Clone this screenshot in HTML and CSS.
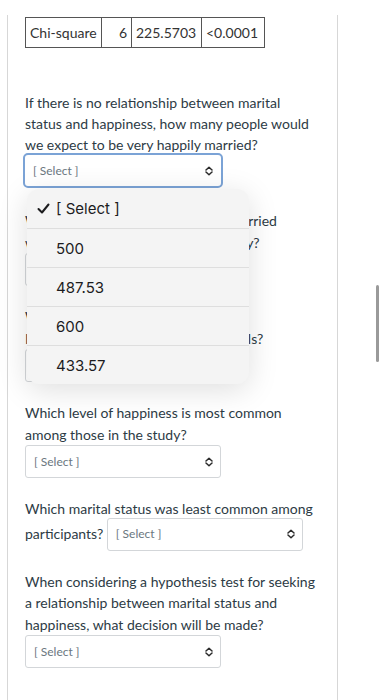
FILE: index.html
```html
<!DOCTYPE html>
<html>
<head>
  <meta charset="UTF-8">
  <title>Quiz - Chi-square</title>
  <link rel="stylesheet" href="styles.css">
</head>
<body>

  <div class="page">
    <table class="stats">
      <tr>
        <td class="label">Chi-square</td>
        <td class="df">6</td>
        <td class="val">225.5703</td>
        <td class="pval">&lt;0.0001</td>
      </tr>
    </table>

    <div class="question">
      <div class="text">If there is no relationship between marital status and happiness, how many people would we expect to be very happily married?</div>
      <div class="select focused">
        <span>[ Select ]</span>
        <svg class="chev" width="8" height="10" viewBox="0 0 8 10"><path d="M1 4 L4 1.2 L7 4 M1 6 L4 8.8 L7 6" fill="none" stroke="#2b2b2b" stroke-width="1.5" stroke-linecap="round" stroke-linejoin="round"/></svg>
      </div>
    </div>

    <div class="question">
      <div class="text">What is the expected count for a married<br>who report being very happy in study?</div>
      <div class="select">
        <span>[ Select ]</span>
        <svg class="chev" width="8" height="10" viewBox="0 0 8 10"><path d="M1 4 L4 1.2 L7 4 M1 6 L4 8.8 L7 6" fill="none" stroke="#2b2b2b" stroke-width="1.5" stroke-linecap="round" stroke-linejoin="round"/></svg>
      </div>
    </div>

    <div class="question">
      <div class="text">Which cell is largest overall?<br>In the happy group, among individuals?</div>
      <div class="select">
        <span>[ Select ]</span>
        <svg class="chev" width="8" height="10" viewBox="0 0 8 10"><path d="M1 4 L4 1.2 L7 4 M1 6 L4 8.8 L7 6" fill="none" stroke="#2b2b2b" stroke-width="1.5" stroke-linecap="round" stroke-linejoin="round"/></svg>
      </div>
    </div>

    <div class="question">
      <div class="text">Which level of happiness is most common among those in the study?</div>
      <div class="select">
        <span>[ Select ]</span>
        <svg class="chev" width="8" height="10" viewBox="0 0 8 10"><path d="M1 4 L4 1.2 L7 4 M1 6 L4 8.8 L7 6" fill="none" stroke="#2b2b2b" stroke-width="1.5" stroke-linecap="round" stroke-linejoin="round"/></svg>
      </div>
    </div>

    <div class="question">
      <div class="text">Which marital status was least common among participants? <div class="select inline">
          <span>[ Select ]</span>
          <svg class="chev" width="8" height="10" viewBox="0 0 8 10"><path d="M1 4 L4 1.2 L7 4 M1 6 L4 8.8 L7 6" fill="none" stroke="#2b2b2b" stroke-width="1.5" stroke-linecap="round" stroke-linejoin="round"/></svg>
        </div>
      </div>
    </div>

    <div class="question">
      <div class="text">When considering a hypothesis test for seeking a relationship between marital status and happiness, what decision will be made?</div>
      <div class="select">
        <span>[ Select ]</span>
        <svg class="chev" width="8" height="10" viewBox="0 0 8 10"><path d="M1 4 L4 1.2 L7 4 M1 6 L4 8.8 L7 6" fill="none" stroke="#2b2b2b" stroke-width="1.5" stroke-linecap="round" stroke-linejoin="round"/></svg>
      </div>
    </div>
  </div>

  <!-- open picker of the first dropdown -->
  <ul class="picker">
    <li class="checked">
      <svg class="check" width="13" height="11" viewBox="0 0 13 11"><path d="M1.5 6 L5 9.5 L11.5 1.5" fill="none" stroke="#1c1c1e" stroke-width="2" stroke-linecap="round" stroke-linejoin="round"/></svg>
      [ Select ]
    </li>
    <li>500</li>
    <li>487.53</li>
    <li>600</li>
    <li>433.57</li>
  </ul>

  <div class="scrollbar"></div>

</body>
</html>
```

FILE: styles.css
```css
body {
  margin: 0;
  background-color: #fff;
  font-family: Lato, "Open Sans", sans-serif;
  color: #2d3b45;
}

.page {
  margin: 15px 0 0 7px;
  width: 312px;
  padding: 2px 0 30px 17px;
  border-left: 1px solid #d7d7d7;
  border-right: 1px solid #d7d7d7;
  min-height: 700px;
}

.stats {
  border-collapse: collapse;
  margin-bottom: 44px;
  font-size: 14px;
  color: #333;
}

.stats td {
  border: 1px solid #555;
  padding: 0 4px;
  height: 29px;
  line-height: 20px;
}

.stats .label { width: 67px; }
.stats .df { width: 21px; text-align: right; }
.stats .val { width: 61px; }
.stats .pval { width: 54px; }

.question {
  margin-bottom: 20px;
  width: 293px;
}

.text {
  font-size: 14px;
  line-height: 21.5px;
}

.question:first-of-type {
  margin-bottom: 22px;
}

.question:first-of-type .text {
  line-height: 21px;
}

.select {
  box-sizing: border-box;
  width: 196px;
  height: 33px;
  border: 1px solid #d3d6d9;
  border-radius: 3px;
  display: flex;
  align-items: center;
  justify-content: space-between;
  padding: 0 7px 0 8px;
  font-size: 12px;
  color: #6b7780;
  background: #fff;
}

.select.focused {
  width: 200px;
  height: 35px;
  margin: -2px 0 0 -2px;
  border: 2px solid #7ba3d6;
  border-radius: 5px;
  padding-left: 8px;
  padding-right: 8px;
}

.select.inline {
  display: inline-flex;
  vertical-align: middle;
  margin-top: -2px;
}

.chev {
  display: block;
}

.picker {
  position: absolute;
  left: 27px;
  top: 189px;
  width: 222px;
  margin: 0;
  padding: 0;
  list-style: none;
  background: #f4f4f4;
  border-radius: 12px;
  box-shadow: 0 6px 30px rgba(0, 0, 0, 0.13);
  font-family: Inter, "Liberation Sans", sans-serif;
  font-size: 15px;
  color: #1c1c1e;
  overflow: hidden;
}

.picker li {
  height: 39px;
  line-height: 39px;
  padding-left: 29px;
  border-top: 1px solid #dedede;
  box-sizing: border-box;
  position: relative;
}

.picker li:first-child {
  border-top: none;
}

.picker .check {
  position: absolute;
  left: 10px;
  top: 14px;
}

.scrollbar {
  position: absolute;
  left: 376px;
  top: 285px;
  width: 3px;
  height: 77px;
  border-radius: 2px;
  background: #9a9a9a;
}
```
